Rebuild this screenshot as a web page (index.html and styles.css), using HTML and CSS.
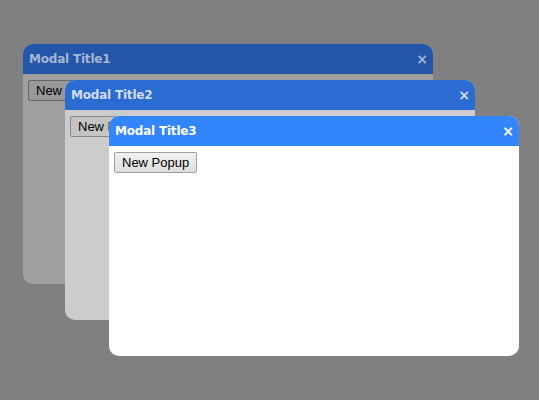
FILE: index.html
```html
<!DOCTYPE html>
<html>
<head>
<meta charset="utf-8">
<link rel="stylesheet" href="styles.css">
</head>
<body>
<div class="desktop">
  <div class="modal m1">
    <div class="head"><span class="title">Modal Title1</span><span class="close">×</span></div>
    <div class="body"><button class="btn">New Popup</button></div>
  </div>
  <div class="modal m2">
    <div class="head"><span class="title">Modal Title2</span><span class="close">×</span></div>
    <div class="body"><button class="btn">New Popup</button></div>
  </div>
  <div class="modal m3">
    <div class="head"><span class="title">Modal Title3</span><span class="close">×</span></div>
    <div class="body"><button class="btn">New Popup</button></div>
  </div>
</div>
</body>
</html>
```
FILE: styles.css
```css
html, body { margin: 0; padding: 0; }
body { background: #808080; width: 539px; height: 400px; overflow: hidden; }
.desktop { position: relative; width: 539px; height: 400px; }
.modal {
  position: absolute;
  width: 410px;
  height: 240px;
  border-radius: 10px;
  overflow: hidden;
  display: flex;
  flex-direction: column;
}
.m1 { left: 23px; top: 44px; background: #a0a0a0; }
.m2 { left: 65px; top: 80px; background: #cccccc; }
.m3 { left: 109px; top: 116px; background: #ffffff; }
.head {
  height: 30px;
  display: flex;
  align-items: center;
  justify-content: space-between;
  padding: 0 6px 0 6px;
  font-family: "DejaVu Sans", Verdana, sans-serif;
  font-weight: bold;
  font-size: 12px;
}
.m1 .head { background: #2356a9; color: #a5b5d2; }
.m2 .head { background: #2b6cd2; color: #d2ddf0; }
.m3 .head { background: #3385fb; color: #ffffff; }
.title { letter-spacing: -0.2px; }
.close { font-family: "DejaVu Sans", sans-serif; font-size: 14px; font-weight: bold; margin-right: -1px; }
.body { padding: 6px 5px; }
.btn {
  font-family: "Liberation Sans", Arial, sans-serif;
  font-size: 13px;
  height: 21px;
  padding: 0 7px;
  border: 1px solid #a0a0a0;
  border-radius: 2px;
  background: linear-gradient(#f2f2f2, #dedede);
  color: #000;
}
.m1 .btn { background: #999; border-color: #666; }
.m2 .btn { background: #c4c4c4; border-color: #888; }
```
